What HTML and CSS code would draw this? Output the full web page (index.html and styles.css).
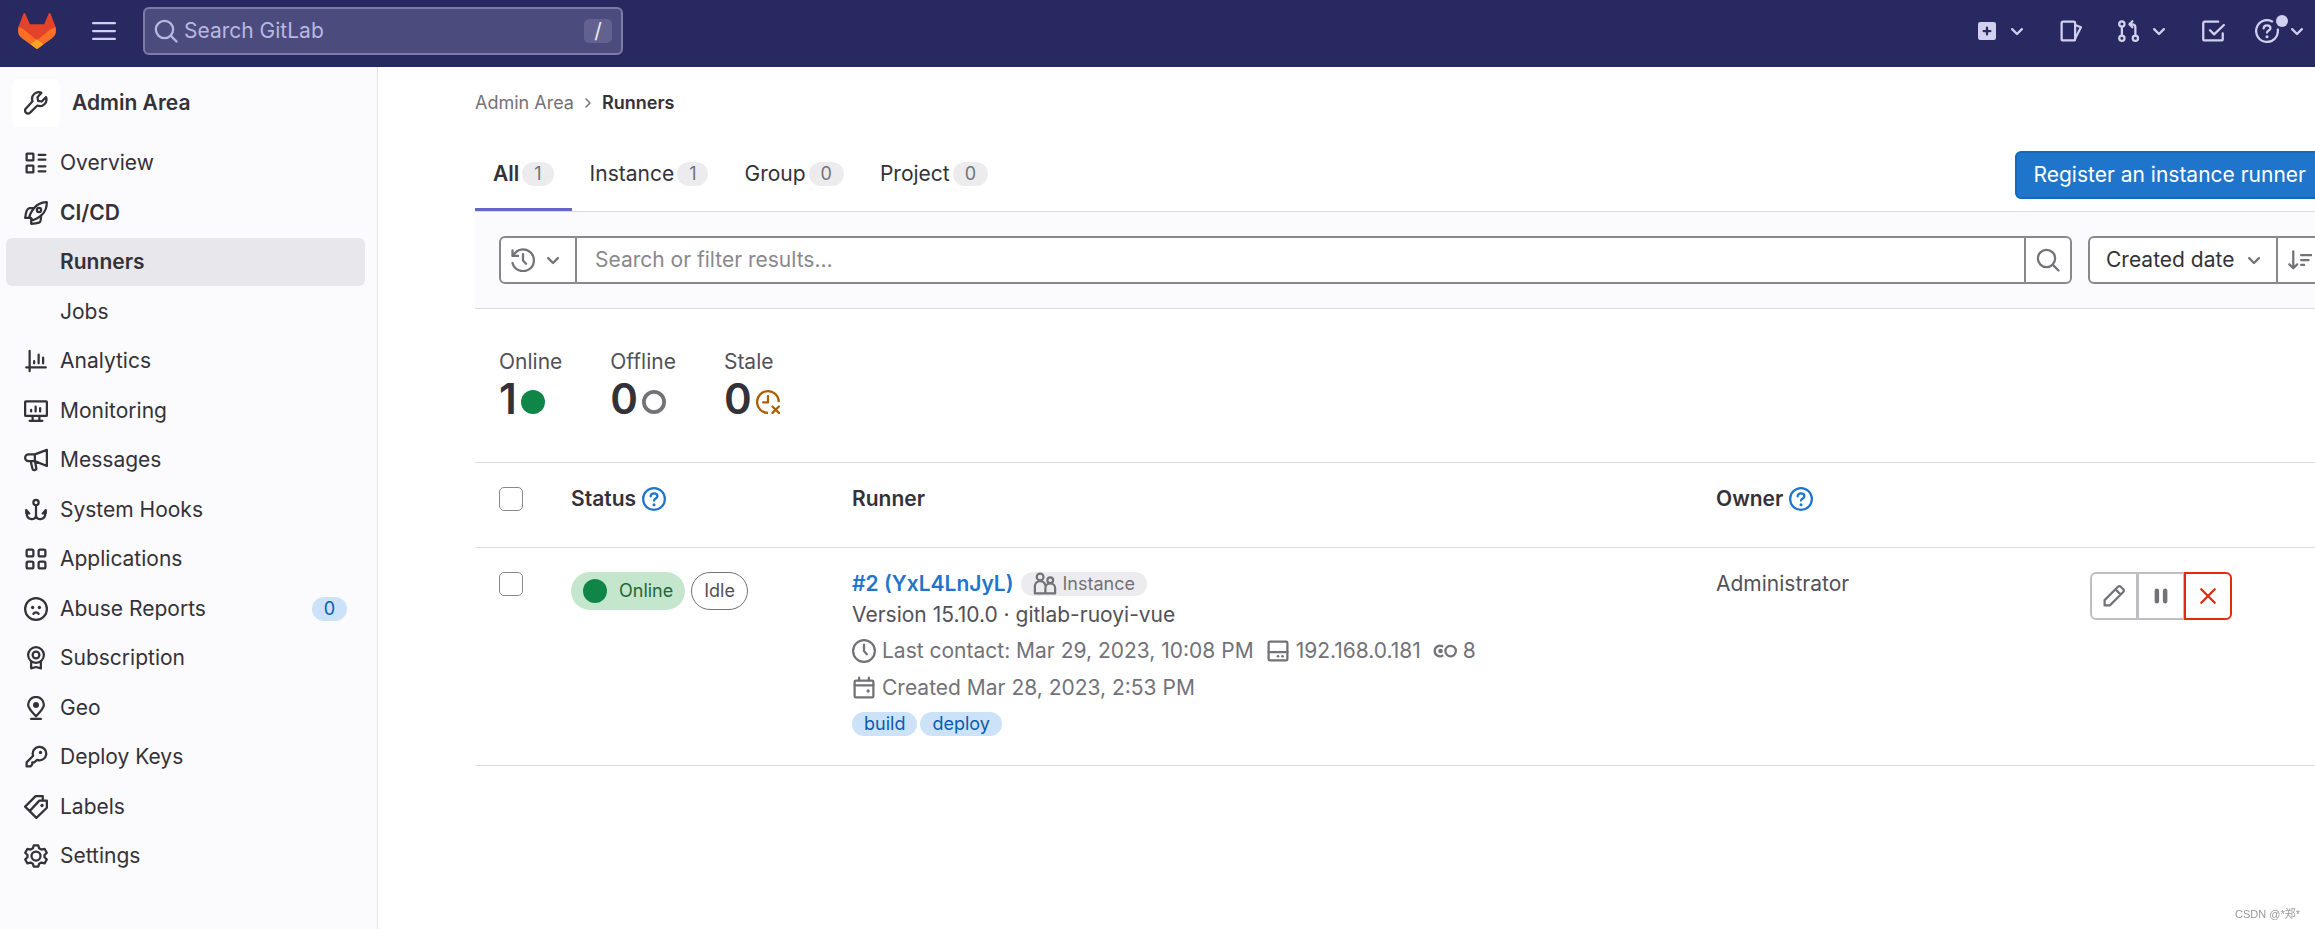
FILE: index.html
```html
<!DOCTYPE html>
<html lang="en">
<head>
  <meta charset="UTF-8">
  <meta name="viewport" content="width=device-width, initial-scale=1">
  <title>Runners · Admin Area · GitLab</title>
  <link rel="stylesheet" href="styles.css">
</head>
<body>
  <svg class="sprite" aria-hidden="true">
    <symbol id="chevron-down" viewBox="0 0 16 16"><path d="m4.75 6.75 3.25 3.25 3.25-3.25"/></symbol>
    <symbol id="chevron-right" viewBox="0 0 16 16"><path d="m6 4 4 4-4 4"/></symbol>
    <symbol id="menu" viewBox="0 0 16 16"><path d="M.75 2.75h14.5M.75 8h14.5M.75 13.25h14.5"/></symbol>
    <symbol id="search" viewBox="0 0 16 16"><circle cx="7" cy="7" r="5.75"/><path d="m11.25 11.25 3.75 3.75"/></symbol>
    <symbol id="plus-square" viewBox="0 0 16 16"><path fill="currentColor" stroke="none" fill-rule="evenodd" d="M3.5 2A1.5 1.5 0 0 0 2 3.5v9A1.5 1.5 0 0 0 3.5 14h9a1.5 1.5 0 0 0 1.5-1.5v-9A1.5 1.5 0 0 0 12.5 2h-9Zm3.75 3.75a.75.75 0 0 1 1.5 0v1.5h1.5a.75.75 0 0 1 0 1.5h-1.5v1.5a.75.75 0 0 1-1.5 0v-1.5h-1.5a.75.75 0 0 1 0-1.5h1.5v-1.5Z"/></symbol>
    <symbol id="issues" viewBox="0 0 16 16"><rect x="1.75" y="1.75" width="9" height="12.5" rx="1"/><path d="m10.75 4 3.9 1.5-3.9 7.5"/></symbol>
    <symbol id="merge" viewBox="0 0 16 16"><circle cx="3.25" cy="3.25" r="1.75"/><circle cx="3.25" cy="12.75" r="1.75"/><circle cx="12.25" cy="12.75" r="1.75"/><path d="M3.25 5v6M12.25 11V5.5a2 2 0 0 0-2-2H8.5M10.25 1.5l-2 2 2 2"/></symbol>
    <symbol id="todo" viewBox="0 0 16 16"><path d="M11.5 1.75h-9a1 1 0 0 0-1 1v10.5a1 1 0 0 0 1 1h11a1 1 0 0 0 1-1V9.5M6 7.5l2.75 2.75L15.25 4"/></symbol>
    <symbol id="question" viewBox="0 0 16 16"><circle cx="8" cy="8" r="7.25"/><path d="M5.75 6.25A2.25 2.25 0 0 1 8 4.25c1.3 0 2.3.8 2.3 1.9C10.3 7.6 8 7.7 8 9"/><circle cx="8" cy="11.75" r="1" fill="currentColor" stroke="none"/></symbol>
    <symbol id="help-cut" viewBox="0 0 16 16"><path d="M11.4 1.6A7.25 7.25 0 1 0 15.2 7"/><path d="M5.75 6.25A2.25 2.25 0 0 1 8 4.25c1.3 0 2.3.8 2.3 1.9C10.3 7.6 8 7.7 8 9"/><circle cx="8" cy="11.75" r="1" fill="currentColor" stroke="none"/></symbol>
    <symbol id="admin" viewBox="0 0 16 16"><path d="M11.6 1.2A4.4 4.4 0 0 0 5.7 6.8L1.3 11.6a1.95 1.95 0 0 0 2.8 2.8l4.8-4.7a4.4 4.4 0 0 0 5.8-5.6L11.8 7 9.4 6.6 9 4.2l2.6-3Z"/></symbol>
    <symbol id="overview" viewBox="0 0 16 16"><rect x="1.75" y="1.75" width="4.5" height="4.5" rx=".3"/><rect x="1.75" y="9.75" width="4.5" height="4.5" rx=".3"/><path d="M9.75 2.5h4.5M9.75 5.75h4.5M9.75 10.25h4.5M9.75 13.5h4.5"/></symbol>
    <symbol id="rocket" viewBox="0 0 16 16"><path d="M15.2.8C10 .9 6.2 3.4 3.6 10.3l2.3 2.5C12.8 10.2 15.2 6.5 15.2.8Z"/><circle cx="10" cy="6" r="1.4"/><path d="M6.3 4.8H3.6C2.2 5 1.2 7.5.8 11.2h3M11.3 9.8c.1 3-.1 4.2-1.3 4.6-1.2.4-3 .7-5.2.8v-3.4"/></symbol>
    <symbol id="chart" viewBox="0 0 16 16"><path d="M3.75 1.25v13.5M1.5 12.25h13M6.75 8v1.5M9.75 3.75V9.5M12.75 5.75V9.5"/></symbol>
    <symbol id="monitor" viewBox="0 0 16 16"><rect x=".75" y="1.5" width="14.5" height="9.75" rx=".5"/><path d="M5.75 11.5v3M10.25 11.5v3M3.75 14.5h8.5M4.75 7.25v1M7.75 5v3.25M10.75 6v2.25"/></symbol>
    <symbol id="messages" viewBox="0 0 16 16"><path d="M7.25 4.25H3a2.25 2.25 0 0 0 0 4.5h4.25l8 3.25V1.25l-8 3ZM7.25 4.25v4.5M4.5 9l1.2 5c.3 1.2 2.7.8 2.5-.5L7.4 9.2"/></symbol>
    <symbol id="hook" viewBox="0 0 16 16"><circle cx="8" cy="3" r="1.75"/><path d="M8 4.75v8.5M8 11.5c0 3.7-6.25 3.8-6.25-1.5M8 11.5c0 3.7 6.25 3.8 6.25-1.5M1.5 8l2 2.25h-2ZM14.5 8l-2 2.25h2Z"/></symbol>
    <symbol id="apps" viewBox="0 0 16 16"><rect x="1.75" y="1.75" width="4.5" height="4.5" rx="1"/><rect x="9.75" y="1.75" width="4.5" height="4.5" rx="1"/><rect x="1.75" y="9.75" width="4.5" height="4.5" rx="1"/><rect x="9.75" y="9.75" width="4.5" height="4.5" rx="1"/></symbol>
    <symbol id="frown" viewBox="0 0 16 16"><circle cx="8" cy="8" r="7.25"/><path d="M6.25 11.25c.8-1.3 2.7-1.3 3.5 0"/><g fill="currentColor" stroke="none"><circle cx="5.75" cy="7" r="1.1"/><circle cx="10.25" cy="7" r="1.1"/></g></symbol>
    <symbol id="license" viewBox="0 0 16 16"><circle cx="8" cy="6" r="5.25"/><circle cx="8" cy="6" r="2.25"/><path d="M4.75 10.5v4.4L8 14l3.25.9v-4.4"/></symbol>
    <symbol id="location" viewBox="0 0 16 16"><path d="M8 13.5C5 10.5 2.75 8.3 2.75 5.9a5.25 5.25 0 0 1 10.5 0C13.25 8.3 11 10.5 8 13.5ZM4.75 15.25h6.5"/><circle cx="8" cy="6" r="2" fill="currentColor" stroke="none"/></symbol>
    <symbol id="key" viewBox="0 0 16 16"><path d="M6.1 7.2A4.5 4.5 0 1 1 8.7 9.9L7 11.5H5.5V13l-1.2 1.25H1.75V11.6L6.1 7.2Z"/><circle cx="11" cy="5" r="1.1" fill="currentColor" stroke="none"/></symbol>
    <symbol id="labels" viewBox="0 0 16 16"><path d="m3.75 10.75 6.5-7h5V8.500l-7 6.750L.75 7.750l7-7h4.750V3.500"/><circle cx="12" cy="7" r="1.1" fill="currentColor" stroke="none"/></symbol>
    <symbol id="settings" viewBox="0 0 16 16"><path d="M6.5.9h3l.6 2 1.5.8 2.1-.5 1.5 2.6-1.5 1.5v1.5l1.5 1.5-1.5 2.6-2.1-.5-1.5.8-.6 1.9h-3l-.6-1.9-1.5-.8-2.1.5L.8 10.300l1.500-1.500V7.300L.8 5.800l1.500-2.600 2.100.5 1.500-.8.6-2Z"/><circle cx="8" cy="8" r="3"/></symbol>
    <symbol id="history" viewBox="0 0 16 16"><path d="M1.6 4.8A7.25 7.25 0 1 1 1 10M1 1.5v3.75h3.75M8 4v4.3l2 2.2"/></symbol>
    <symbol id="sort" viewBox="0 0 16 16"><path d="M3.5 2.25v11M.9 10.9l2.6 2.6 2.6-2.6M8.75 4.75h7M8.75 8h5M8.75 11.25h2"/></symbol>
    <symbol id="dot" viewBox="0 0 16 16"><circle cx="8" cy="8" r="8" fill="currentColor" stroke="none"/></symbol>
    <symbol id="ring" viewBox="0 0 16 16"><circle cx="8" cy="8" r="6.75" stroke-width="2.5"/></symbol>
    <symbol id="stale" viewBox="0 0 16 16"><path stroke-linecap="butt" d="M15.2 8A7.25 7.25 0 1 0 8 15.25"/><path d="M8 4v4.25H4.75M11 11l4.25 4.25M15.25 11 11 15.25"/></symbol>
    <symbol id="users" viewBox="0 0 16 16"><circle cx="4.75" cy="3.25" r="2.25"/><circle cx="11.5" cy="5.5" r="1.9"/><path d="M8.2 14.25H1.25V9.5a3.5 3.5 0 0 1 6.9-.8M8.25 14.25h6.5v-3.5a3.25 3.25 0 0 0-6.5 0Z"/></symbol>
    <symbol id="clock" viewBox="0 0 16 16"><circle cx="8" cy="8" r="7.25"/><path d="M8 3.75V8l1.9 2.25"/></symbol>
    <symbol id="disk" viewBox="0 0 16 16"><rect x="1.75" y="1.75" width="12.5" height="12.5" rx=".8"/><path d="M1.75 8.75h12.5"/><g fill="currentColor" stroke="none"><circle cx="8" cy="11.5" r=".9"/><circle cx="11" cy="11.5" r=".9"/></g></symbol>
    <symbol id="jobs" viewBox="0 0 16 16"><circle cx="11.75" cy="8" r="3.5"/><path d="M6.25 4.9a3.5 3.5 0 1 0 0 6.2"/><circle cx="5" cy="8" r="1.5" fill="currentColor" stroke="none"/></symbol>
    <symbol id="calendar" viewBox="0 0 16 16"><rect x="1.75" y="3" width="12.5" height="11.25" rx=".8"/><path d="M1.75 6.25h12.5M4.75 1v2M11.25 1v2"/><circle cx="10.75" cy="10" r="1.1" fill="currentColor" stroke="none"/></symbol>
    <symbol id="pencil" viewBox="0 0 16 16"><path d="M1.75 14.25v-3.5l8.9-8.9a1.3 1.3 0 0 1 1.9 0l1.6 1.6a1.3 1.3 0 0 1 0 1.9l-8.9 8.9h-3.5ZM9 3.600 12.400 7"/></symbol>
    <symbol id="pause" viewBox="0 0 16 16"><path stroke-width="3" d="M5.25 4.5v7M10.75 4.5v7"/></symbol>
    <symbol id="close" viewBox="0 0 16 16"><path d="m3.5 3.5 9 9M12.5 3.5l-9 9"/></symbol>
  </svg>

  <header class="navbar">
    <a href="#" class="logo" aria-label="GitLab">
      <svg viewBox="0 0 38 36" aria-hidden="true">
        <path fill="#e24329" d="M7 0 12 11.5h14L31 0l1.5.5L38 15l-1 7-18 14L1 22 0 15 5.5.5Z"/>
        <path fill="#fc6d26" d="M.6 14.2C3 14.5 6 16.5 8.5 18.6L19 27l10.5-8.4c2.5-2.1 5.5-4.1 7.900-4.400 1.200 4.300.4 8.300-3.600 11.300L19 36 4.200 25.500C.2 22.500-.6 18.500.6 14.200Z"/>
        <path fill="#e24329" d="M8.5 18.6 19 27l10.5-8.4L26 11.5H12Z"/>
        <path fill="#fca326" d="m12.5 31.3 6.5-5 6.5 5L20 35.500q-1 .6-2 0Z"/>
      </svg>
    </a>
    <button class="icon-btn menu-btn" aria-label="Menu"><svg class="icon"><use href="#menu"/></svg></button>
    <div class="nav-search">
      <svg class="icon"><use href="#search"/></svg>
      <input type="text" placeholder="Search GitLab" aria-label="Search GitLab">
      <kbd>/</kbd>
    </div>
    <nav class="nav-icons" aria-label="Top">
      <button class="icon-btn" aria-label="Create new"><svg class="icon"><use href="#plus-square"/></svg><svg class="icon"><use href="#chevron-down"/></svg></button>
      <a href="#" class="icon-btn" aria-label="Issues"><svg class="icon"><use href="#issues"/></svg></a>
      <button class="icon-btn merge-btn" aria-label="Merge requests"><svg class="icon"><use href="#merge"/></svg><svg class="icon"><use href="#chevron-down"/></svg></button>
      <a href="#" class="icon-btn" aria-label="To-do list"><svg class="icon"><use href="#todo"/></svg></a>
      <button class="icon-btn help-btn" aria-label="Help"><svg class="icon"><use href="#help-cut"/></svg><svg class="icon"><use href="#chevron-down"/></svg><span class="notify"></span></button>
    </nav>
  </header>

  <div class="layout">
    <aside class="sidebar">
      <a href="#" class="context"><span class="avatar"><svg class="icon"><use href="#admin"/></svg></span>Admin Area</a>
      <nav aria-label="Admin">
        <ul class="menu">
          <li><a href="#"><svg class="icon"><use href="#overview"/></svg>Overview</a></li>
          <li><a href="#" class="open"><svg class="icon"><use href="#rocket"/></svg>CI/CD</a></li>
          <li><a href="#" class="sub active" aria-current="page">Runners</a></li>
          <li><a href="#" class="sub">Jobs</a></li>
          <li><a href="#"><svg class="icon"><use href="#chart"/></svg>Analytics</a></li>
          <li><a href="#"><svg class="icon"><use href="#monitor"/></svg>Monitoring</a></li>
          <li><a href="#"><svg class="icon"><use href="#messages"/></svg>Messages</a></li>
          <li><a href="#"><svg class="icon"><use href="#hook"/></svg>System Hooks</a></li>
          <li><a href="#"><svg class="icon"><use href="#apps"/></svg>Applications</a></li>
          <li><a href="#"><svg class="icon"><use href="#frown"/></svg>Abuse Reports <span class="badge info">0</span></a></li>
          <li><a href="#"><svg class="icon"><use href="#license"/></svg>Subscription</a></li>
          <li><a href="#"><svg class="icon"><use href="#location"/></svg>Geo</a></li>
          <li><a href="#"><svg class="icon"><use href="#key"/></svg>Deploy Keys</a></li>
          <li><a href="#"><svg class="icon"><use href="#labels"/></svg>Labels</a></li>
          <li><a href="#"><svg class="icon"><use href="#settings"/></svg>Settings</a></li>
        </ul>
      </nav>
    </aside>

    <main class="content">
      <nav class="breadcrumbs" aria-label="Breadcrumbs">
        <a href="#">Admin Area</a>
        <svg class="icon small"><use href="#chevron-right"/></svg>
        <a href="#" class="current">Runners</a>
      </nav>

      <div class="tabs-row">
        <div class="tabs">
          <a href="#" class="tab active">All <span class="badge">1</span></a>
          <a href="#" class="tab">Instance <span class="badge">1</span></a>
          <a href="#" class="tab">Group <span class="badge">0</span></a>
          <a href="#" class="tab">Project <span class="badge">0</span></a>
        </div>
        <button class="register">Register an instance runner</button>
      </div>

      <div class="filter-bar">
        <div class="group filter-search">
          <button class="history" aria-label="Recent searches"><svg class="icon"><use href="#history"/></svg><svg class="icon"><use href="#chevron-down"/></svg></button>
          <input type="text" placeholder="Search or filter results…" aria-label="Search or filter results">
          <button class="square" aria-label="Search"><svg class="icon"><use href="#search"/></svg></button>
        </div>
        <div class="group">
          <div class="sort-by">
            <select aria-label="Sort by">
              <option>Created date</option>
              <option>Last contact</option>
            </select>
            <svg class="icon"><use href="#chevron-down"/></svg>
          </div>
          <button class="square" aria-label="Sort direction"><svg class="icon"><use href="#sort"/></svg></button>
        </div>
      </div>

      <div class="stats">
        <div class="stat"><span>Online</span><div class="value">1<svg class="icon green"><use href="#dot"/></svg></div></div>
        <div class="stat"><span>Offline</span><div class="value">0<svg class="icon grey"><use href="#ring"/></svg></div></div>
        <div class="stat"><span>Stale</span><div class="value">0<svg class="icon orange"><use href="#stale"/></svg></div></div>
      </div>

      <table class="runners">
        <thead>
          <tr>
            <th class="col-check"><input type="checkbox" aria-label="Select all"></th>
            <th class="col-status"><div class="head">Status <a href="#" aria-label="Status help"><svg class="icon"><use href="#question"/></svg></a></div></th>
            <th>Runner</th>
            <th class="col-owner"><div class="head">Owner <a href="#" aria-label="Owner help"><svg class="icon"><use href="#question"/></svg></a></div></th>
            <th class="col-actions"></th>
          </tr>
        </thead>
        <tbody>
          <tr>
            <td><input type="checkbox" aria-label="Select runner #2"></td>
            <td>
              <div class="statuses">
                <span class="status online"><svg class="icon"><use href="#dot"/></svg>Online</span>
                <span class="status idle">Idle</span>
              </div>
            </td>
            <td>
              <div class="runner-name"><a href="#">#2 (YxL4LnJyL)</a><span class="badge type"><svg class="icon"><use href="#users"/></svg>Instance</span></div>
              <div class="version">Version 15.10.0 · gitlab-ruoyi-vue</div>
              <div class="meta">
                <span><svg class="icon"><use href="#clock"/></svg>Last contact: Mar 29, 2023, 10:08 PM</span>
                <span><svg class="icon"><use href="#disk"/></svg>192.168.0.181</span>
                <span><svg class="icon"><use href="#jobs"/></svg>8</span>
              </div>
              <div class="meta"><span><svg class="icon"><use href="#calendar"/></svg>Created Mar 28, 2023, 2:53 PM</span></div>
              <div class="tags"><span class="badge info">build</span><span class="badge info">deploy</span></div>
            </td>
            <td>Administrator</td>
            <td>
              <div class="actions">
                <a href="#" aria-label="Edit"><svg class="icon"><use href="#pencil"/></svg></a>
                <button aria-label="Pause"><svg class="icon"><use href="#pause"/></svg></button>
                <button class="danger" aria-label="Delete"><svg class="icon"><use href="#close"/></svg></button>
              </div>
            </td>
          </tr>
        </tbody>
      </table>
    </main>
  </div>

  <div class="watermark">CSDN @*郑*</div>
</body>
</html>
```
FILE: styles.css
```css
* {
  box-sizing: border-box;
}
body {
  margin: 0;
  min-height: 100vh;
  display: flex;
  flex-direction: column;
  overflow-x: hidden;
  background: #fff;
  color: #333238;
  font-family: Inter, "Noto Sans CJK SC", sans-serif;
  font-size: 21px;
  line-height: 24px;
}
a {
  color: inherit;
  text-decoration: none;
}
button, input, select {
  font: inherit;
  color: inherit;
}
button {
  cursor: pointer;
}
.sprite {
  display: none;
}
.icon {
  width: 24px;
  height: 24px;
  flex: none;
  fill: none;
  stroke: currentColor;
  stroke-width: 1.5;
  stroke-linecap: round;
  stroke-linejoin: round;
}
.icon.small {
  width: 16px;
  height: 16px;
}
.badge {
  display: inline-flex;
  align-items: center;
  height: 24px;
  padding: 0 12px;
  border-radius: 12px;
  background: #ececef;
  color: #737278;
  font-size: 18px;
  font-weight: 400;
}
.badge.info {
  background: #cbe2f9;
  color: #0b5cad;
}

/* top bar */
.navbar {
  display: flex;
  align-items: center;
  height: 67px;
  padding: 0 6px 5px 18px;
  background: #292961;
  color: #d1d0ef;
}
.logo svg {
  display: block;
  width: 38px;
  height: 36px;
}
.icon-btn {
  display: flex;
  gap: 6px;
  padding: 0;
  border: none;
  background: none;
  color: inherit;
}
.menu-btn {
  margin: 0 27px 0 36px;
}
.nav-search {
  display: flex;
  align-items: center;
  width: 480px;
  height: 48px;
  padding: 0 9px;
  border: 2px solid #7d7ca5;
  border-radius: 6px;
  background: #4c4b7d;
  color: #b9b8e0;
}
.nav-search input {
  flex: 1;
  min-width: 0;
  padding: 0 6px;
  border: none;
  background: none;
}
.nav-search input::placeholder {
  color: #b9b8e0;
  opacity: 1;
}
.nav-search kbd {
  width: 28px;
  border-radius: 5px;
  background: #626190;
  color: #ececef;
  font: inherit;
  text-align: center;
}
.nav-icons {
  display: flex;
  gap: 30px;
  margin-left: auto;
}
.merge-btn {
  margin-left: 4px;
}
.help-btn {
  position: relative;
}
.notify {
  position: absolute;
  top: -4px;
  left: 21px;
  width: 12px;
  height: 12px;
  border-radius: 50%;
  background: #d1d0ef;
}

/* sidebar */
.layout {
  display: flex;
  flex: 1;
}
.sidebar {
  flex: none;
  width: 378px;
  border-right: 1px solid #e4e3e8;
  background: #fbfafd;
}
.context {
  display: flex;
  align-items: center;
  gap: 12px;
  padding: 12px;
  font-weight: 600;
}
.avatar {
  padding: 12px;
  border-radius: 6px;
  background: #fff;
}
.avatar .icon {
  display: block;
}
.menu {
  margin: 0;
  padding: 0 12px 0 6px;
  list-style: none;
}
.menu li {
  margin-bottom: 2px;
}
.menu li:nth-child(even) {
  margin-bottom: 1px;
}
.menu a {
  display: flex;
  align-items: center;
  gap: 12px;
  height: 48px;
  padding: 0 18px;
  border-radius: 6px;
}
.menu .open, .menu .active {
  font-weight: 600;
}
.menu .sub {
  padding-left: 54px;
}
.menu .active {
  background: #e8e7eb;
}
.menu .badge {
  margin-left: auto;
}

/* content, a little wider than the window */
.content {
  flex: 1;
  min-width: 0;
  margin-right: -33px;
  padding: 24px 0 0 97px;
}
.breadcrumbs {
  display: flex;
  align-items: center;
  gap: 6px;
  color: #737278;
  font-size: 18px;
}
.breadcrumbs .current {
  color: #333238;
  font-weight: 600;
}
.tabs-row {
  display: flex;
  justify-content: space-between;
  align-items: flex-end;
  height: 97px;
  padding-right: 24px;
  border-bottom: 1px solid #dcdcde;
}
.tabs {
  display: flex;
}
.tab {
  display: flex;
  align-items: center;
  gap: 3px;
  height: 72px;
  padding: 0 18px;
  border-bottom: 3px solid transparent;
}
.tab.active {
  border-color: #6666c4;
  font-weight: 600;
}
.register {
  height: 48px;
  margin-bottom: 12px;
  padding: 0 16px;
  border: 2px solid #1068bf;
  border-radius: 6px;
  background: #1f75cb;
  color: #fff;
}
.filter-bar {
  display: flex;
  gap: 16px;
  padding: 24px;
  border-bottom: 1px solid #dcdcde;
  background: #fbfafd;
}
.group {
  display: flex;
  height: 48px;
  border: 2px solid #89888d;
  border-radius: 6px;
  background: #fff;
  overflow: hidden;
}
.group > * + * {
  border-left: 2px solid #89888d !important;
}
.group button {
  display: flex;
  align-items: center;
  border: none;
  background: none;
  color: #737278;
}
.group .square {
  padding: 0 10px;
}
.history {
  gap: 6px;
  padding: 0 10px;
}
.filter-search {
  flex: 1;
}
.filter-search input {
  flex: 1;
  min-width: 0;
  padding: 0 18px;
  border: none;
}
.filter-search input::placeholder {
  color: #89888d;
  opacity: 1;
}
.sort-by {
  position: relative;
}
.sort-by select {
  width: 186px;
  height: 100%;
  padding: 0 16px;
  border: none;
  background: none;
  appearance: none;
}
.sort-by .icon {
  position: absolute;
  top: 10px;
  right: 10px;
  color: #737278;
  pointer-events: none;
}

/* counters */
.stats {
  display: flex;
  gap: 48px;
  padding: 41px 24px 42px;
  color: #535158;
}
.value {
  display: flex;
  align-items: flex-end;
  gap: 4px;
  height: 46px;
  padding-top: 4px;
  color: #333238;
  font-size: 42px;
  font-weight: 600;
  line-height: 42px;
}
.value .icon {
  margin-bottom: 6px;
}
.green {
  color: #108548;
}
.grey {
  color: #737278;
}
.orange {
  color: #ab6100;
}

/* table */
.runners {
  width: 100%;
  border-collapse: collapse;
  table-layout: fixed;
  border-top: 1px solid #dcdcde;
}
.runners th, .runners td {
  padding: 24px;
  border-bottom: 1px solid #dcdcde;
  text-align: left;
  vertical-align: top;
}
.runners th {
  height: 85px;
  font-weight: 600;
}
.runners td {
  color: #535158;
}
.runners .col-check {
  width: 72px;
}
.col-status {
  width: 281px;
}
.col-owner {
  width: 374px;
}
.col-actions {
  width: 282px;
}
.runners input {
  display: block;
  width: 24px;
  height: 24px;
  margin: 0;
  border: 1px solid #89888d;
  border-radius: 5px;
  background: #fff;
  appearance: none;
}
.runners input:checked {
  background: #1f75cb;
}
.head, .statuses {
  display: flex;
  gap: 6px;
}
.head a {
  color: #1f75cb;
}
.head .icon {
  display: block;
}
.status {
  display: flex;
  align-items: center;
  gap: 12px;
  height: 38px;
  padding: 0 12px;
  border-radius: 19px;
  font-size: 18px;
}
.online {
  background: #c3e6cd;
  color: #24663b;
}
.online .icon {
  color: #108548;
}
.idle {
  border: 1px solid #737278;
}
.runner-name {
  display: flex;
  gap: 7px;
  height: 28px;
}
.runner-name a {
  color: #1f75cb;
  font-weight: 600;
}
.type {
  gap: 6px;
}
.version {
  line-height: 30px;
  margin-bottom: 2px;
}
.meta {
  display: flex;
  gap: 12px;
  color: #737278;
}
.meta span {
  display: flex;
  align-items: center;
  gap: 6px;
  height: 37px;
}
.tags {
  display: flex;
  align-items: center;
  gap: 3px;
  height: 32px;
  margin: 2px 0 1px;
}
.actions {
  display: flex;
}
.actions > * {
  display: flex;
  align-items: center;
  width: 48px;
  height: 48px;
  padding: 0 10px;
  border: 2px solid #bfbfc3;
  background: #fff;
  color: #737278;
}
.actions > * + * {
  margin-left: -1px;
}
.actions > :first-child {
  border-radius: 6px 0 0 6px;
}
.actions .danger {
  border-color: #dd2b0e;
  border-radius: 0 6px 6px 0;
  color: #dd2b0e;
}

.watermark {
  position: fixed;
  right: 15px;
  bottom: 3px;
  color: #999;
  font-family: "Liberation Sans", "Noto Sans CJK SC", sans-serif;
  font-size: 11px;
}
```
